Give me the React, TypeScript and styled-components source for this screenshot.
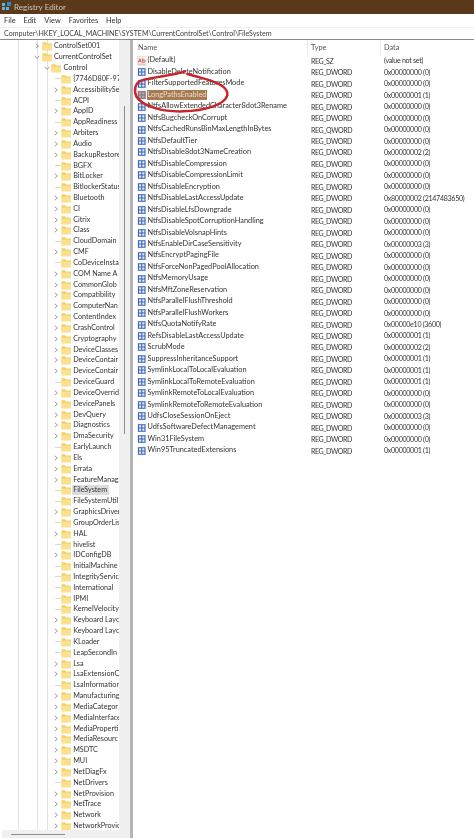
import React from "react";
import styled, { createGlobalStyle } from "styled-components";

const Global = createGlobalStyle`
  html, body { margin: 0; padding: 0; background: #fff; }
  body { width: 474px; height: 838px; overflow: hidden; font-family: "Lato", "Noto Sans", sans-serif; }
`;
const Window = styled.div`
  position: relative; width: 474px; height: 838px; display: flex; flex-direction: column;
  overflow: hidden; background: #fff; color: #333; font-size: 7.35px; filter: blur(0.4px);
`;
const TitleBar = styled.div`
  height: 13.5px; flex: none; background: #5b3a1b; display: flex; align-items: center; gap: 3px;
  padding-left: 2px; color: #cfc3b6; font-size: 8.1px;
`;
const MenuBar = styled.div`
  height: 13px; flex: none; display: flex; align-items: center; padding-left: 4px; gap: 8px; font-size: 7.4px;
`;
const AddressBar = styled.div`
  height: 11.5px; flex: none; display: flex; align-items: center; padding-left: 4px; font-size: 7.08px;
  border-top: 1px solid #f0f0f0; border-bottom: 1px solid #8a8a8a; white-space: nowrap; color: #3c3c3c;
`;
const Body = styled.div`flex: 1; min-height: 0; display: flex;`;
const TreePane = styled.div`
  width: 130px; flex: none; display: flex; flex-direction: column; overflow: hidden;
`;
const TreeMain = styled.div`flex: 1; min-height: 0; display: flex; overflow: hidden;`;
const TreeList = styled.div`
  width: 119px; flex: none; overflow: hidden; padding-top: 1px; font-size: 7.2px;
  background:
    linear-gradient(#e2e2e2, #e2e2e2) 18px 0 / 1px 100% no-repeat,
    linear-gradient(#e2e2e2, #e2e2e2) 37px 0 / 1px 100% no-repeat,
    linear-gradient(#e2e2e2, #e2e2e2) 47px 0 / 1px 100% no-repeat;
`;
const TreeRow = styled.div<{ $level: number }>`
  height: 10.83px; display: flex; align-items: center; white-space: nowrap;
  padding-left: ${p => 33 + p.$level * 9.6}px;
`;
const Chevron = styled.span`
  width: 8px; flex: none; margin-right: 0.5px; display: flex; justify-content: center; color: #8d8d8d;
`;
const Connector = styled.span`
  width: 5.5px; height: 1px; flex: none; margin-left: 3px; background: #d8d8d8;
`;
const Label = styled.span<{ $sel?: boolean }>`
  margin-left: 0.5px; padding: 0 1.5px; height: 10px; line-height: 10px;
  background: ${p => (p.$sel ? "#dcdcdc" : "transparent")};
`;
const VTrack = styled.div`
  position: relative; flex: 1; background: #f0f0f0;
`;
const VThumb = styled.div`
  position: absolute; left: 4.5px; top: 66px; width: 1.5px; height: 328px; background: #8e8e8e;
`;
const HTrack = styled.div`
  position: relative; height: 8px; flex: none; margin-left: 2px; background: #f0f0f0;
`;
const HThumb = styled.div`
  position: absolute; left: 9px; top: 3.5px; width: 54px; height: 1.5px; background: #8e8e8e;
`;
const Splitter = styled.div`width: 3px; flex: none; background: #b4b4b4;`;
const ValuePane = styled.div`flex: 1; min-width: 0; display: flex; flex-direction: column; padding-left: 4px;`;
const HeaderRow = styled.div`
  height: 15px; flex: none; display: grid; grid-template-columns: 170px 73px 1fr; align-items: center; color: #555;
`;
const HeaderCell = styled.div<{ $sep?: boolean }>`
  height: 100%; display: flex; align-items: center; padding-left: ${p => (p.$sep ? "4px" : "1px")};
  box-shadow: ${p => (p.$sep ? "inset 1px 0 0 #ececec" : "none")};
`;
const ValueRow = styled.div`
  height: 11.47px; display: grid; grid-template-columns: 170px 73px 1fr; align-items: center; white-space: nowrap;
`;
const NameCell = styled.div`display: flex; align-items: center; min-width: 0;`;
const ValName = styled.span<{ $sel?: boolean }>`
  padding: 0 1px; height: 10.5px; line-height: 10.5px;
  background: ${p => (p.$sel ? "#a67a52" : "transparent")};
  color: ${p => (p.$sel ? "#ecdcc8" : "inherit")};
`;
const TypeCell = styled.div`padding-left: 4px; font-size: 7px; letter-spacing: -0.39px;`;
const DataCell = styled.div`padding-left: 4px; font-size: 7.1px; letter-spacing: -0.3px;`;
const Ink = styled.svg`position: absolute; left: 130px; top: 62px; pointer-events: none;`;

const Folder = () => (
  <svg width="10.5" height="10" viewBox="0 0 11 10" style={{ flex: "none" }}>
    <path d="M.5 1.2h3.8l1 1.3h5.2v7H.5z" fill="#f6cf62" />
    <path d="M.5 3.6h10v5.9H.5z" fill="#fbe08e" />
  </svg>
);
const Chev = ({ open }: { open?: boolean }) => (
  <svg width="6" height="6" viewBox="0 0 6 6">
    <path d={open ? "M.8 1.8L3 4.4l2.2-2.6" : "M1.8.8L4.4 3 1.8 5.2"} fill="none" stroke="currentColor" strokeWidth=".9" />
  </svg>
);
const DwordIcon = ({ dim }: { dim?: boolean }) => {
  const c = dim ? "#7d7486" : "#3a62b4";
  return (
    <svg width="9.5" height="10" viewBox="0 0 10 10" style={{ flex: "none" }}>
      <rect x=".5" y=".5" width="9" height="9" fill={dim ? "#b9aeb0" : "#e4ecf8"} />
      <path d="M1 1.5h8M1 5h8M1 8.5h8M1.6 1v8M5 1v8M8.4 1v8" stroke={c} strokeWidth="1.1" fill="none" />
    </svg>
  );
};
const SzIcon = () => (
  <svg width="9.5" height="10" viewBox="0 0 10 10" style={{ flex: "none" }}>
    <rect x=".5" y=".5" width="9" height="9" fill="#f7efe9" stroke="#d8d0cc" strokeWidth=".5" />
    <path d="M1.5 6.5L3 2.6l1.5 3.9M2 5.2h2M6 2.2v4.3M6 4.4c1.8-1.2 2.8 0 2.4 1.2-.4 1-1.8 1.2-2.4.6" fill="none" stroke="#d2483a" strokeWidth=".9" />
    <path d="M1 8.4h8" stroke="#b0b0b0" strokeWidth=".7" />
  </svg>
);

type T = [string, number, boolean | null, boolean?];
const tree: T[] = [
  ["ControlSet001", 0, false], ["CurrentControlSet", 0, true], ["Control", 1, true],
  ["{7746D80F-97E", 2, null], ["AccessibilitySe", 2, false], ["ACPI", 2, null], ["AppID", 2, false],
  ["AppReadiness", 2, null], ["Arbiters", 2, false], ["Audio", 2, false], ["BackupRestore", 2, false],
  ["BGFX", 2, null], ["BitLocker", 2, false], ["BitlockerStatus", 2, null], ["Bluetooth", 2, false],
  ["CI", 2, false], ["Citrix", 2, false], ["Class", 2, false], ["CloudDomain", 2, null], ["CMF", 2, false],
  ["CoDeviceInsta", 2, null], ["COM Name A", 2, false], ["CommonGlob", 2, false], ["Compatibility", 2, false],
  ["ComputerNan", 2, false], ["ContentIndex", 2, false], ["CrashControl", 2, false], ["Cryptography", 2, false],
  ["DeviceClasses", 2, false], ["DeviceContair", 2, false], ["DeviceContair", 2, false], ["DeviceGuard", 2, null],
  ["DeviceOverrid", 2, false], ["DevicePanels", 2, false], ["DevQuery", 2, false], ["Diagnostics", 2, false],
  ["DmaSecurity", 2, false], ["EarlyLaunch", 2, null], ["Els", 2, false], ["Errata", 2, false],
  ["FeatureManag", 2, false], ["FileSystem", 2, null, true], ["FileSystemUtil", 2, null], ["GraphicsDriver", 2, false],
  ["GroupOrderLis", 2, null], ["HAL", 2, false], ["hivelist", 2, null], ["IDConfigDB", 2, false],
  ["InitialMachine", 2, null], ["IntegrityServic", 2, null], ["International", 2, null], ["IPMI", 2, null],
  ["KernelVelocity", 2, null], ["Keyboard Layc", 2, false], ["Keyboard Layc", 2, false], ["KLoader", 2, null],
  ["LeapSecondIn", 2, null], ["Lsa", 2, false], ["LsaExtensionC", 2, false], ["LsaInformation", 2, null],
  ["Manufacturing", 2, false], ["MediaCategor", 2, false], ["MediaInterface", 2, false], ["MediaProperti", 2, false],
  ["MediaResourc", 2, false], ["MSDTC", 2, false], ["MUI", 2, false], ["NetDiagFx", 2, false], ["NetDrivers", 2, null],
  ["NetProvision", 2, false], ["NetTrace", 2, false], ["Network", 2, false], ["NetworkProvic", 2, false],
];
const d = "REG_DWORD";
const values: [string, string, string][] = [
  ["(Default)", "REG_SZ", "(value not set)"],
  ["DisableDeleteNotification", d, "0x00000000 (0)"],
  ["FilterSupportedFeaturesMode", d, "0x00000000 (0)"],
  ["LongPathsEnabled", d, "0x00000001 (1)"],
  ["NtfsAllowExtendedCharacter8dot3Rename", d, "0x00000000 (0)"],
  ["NtfsBugcheckOnCorrupt", d, "0x00000000 (0)"],
  ["NtfsCachedRunsBinMaxLengthInBytes", "REG_QWORD", "0x00000000 (0)"],
  ["NtfsDefaultTier", d, "0x00000000 (0)"],
  ["NtfsDisable8dot3NameCreation", d, "0x00000002 (2)"],
  ["NtfsDisableCompression", d, "0x00000000 (0)"],
  ["NtfsDisableCompressionLimit", d, "0x00000000 (0)"],
  ["NtfsDisableEncryption", d, "0x00000000 (0)"],
  ["NtfsDisableLastAccessUpdate", d, "0x80000002 (2147483650)"],
  ["NtfsDisableLfsDowngrade", d, "0x00000000 (0)"],
  ["NtfsDisableSpotCorruptionHandling", d, "0x00000000 (0)"],
  ["NtfsDisableVolsnapHints", d, "0x00000000 (0)"],
  ["NtfsEnableDirCaseSensitivity", d, "0x00000003 (3)"],
  ["NtfsEncryptPagingFile", d, "0x00000000 (0)"],
  ["NtfsForceNonPagedPoolAllocation", d, "0x00000000 (0)"],
  ["NtfsMemoryUsage", d, "0x00000000 (0)"],
  ["NtfsMftZoneReservation", d, "0x00000000 (0)"],
  ["NtfsParallelFlushThreshold", d, "0x00000000 (0)"],
  ["NtfsParallelFlushWorkers", d, "0x00000000 (0)"],
  ["NtfsQuotaNotifyRate", d, "0x00000e10 (3600)"],
  ["RefsDisableLastAccessUpdate", d, "0x00000001 (1)"],
  ["ScrubMode", d, "0x00000002 (2)"],
  ["SuppressInheritanceSupport", d, "0x00000001 (1)"],
  ["SymlinkLocalToLocalEvaluation", d, "0x00000001 (1)"],
  ["SymlinkLocalToRemoteEvaluation", d, "0x00000001 (1)"],
  ["SymlinkRemoteToLocalEvaluation", d, "0x00000000 (0)"],
  ["SymlinkRemoteToRemoteEvaluation", d, "0x00000000 (0)"],
  ["UdfsCloseSessionOnEject", d, "0x00000003 (3)"],
  ["UdfsSoftwareDefectManagement", d, "0x00000000 (0)"],
  ["Win31FileSystem", d, "0x00000000 (0)"],
  ["Win95TruncatedExtensions", d, "0x00000001 (1)"],
];

export default function App() {
  return (
    <Window>
      <Global />
      <TitleBar>
        <svg width="9" height="9" viewBox="0 0 9 9"><path d="M0 1h3v3H0zM0 5h3v3H0zM4 5h3v3H4z" fill="#5fb4e4" /><path d="M5 0h4v4H5z" fill="#2f86c8" /></svg>
        <span>Registry Editor</span>
      </TitleBar>
      <MenuBar>
        <span>File</span><span>Edit</span><span>View</span><span>Favorites</span><span>Help</span>
      </MenuBar>
      <AddressBar>Computer\HKEY_LOCAL_MACHINE\SYSTEM\CurrentControlSet\Control\FileSystem</AddressBar>
      <Body>
        <TreePane>
          <TreeMain>
            <TreeList>
              {tree.map(([name, level, open, sel], i) => (
                <TreeRow key={i} $level={level}>
                  {open === null ? <Connector /> : <Chevron><Chev open={open} /></Chevron>}
                  <Folder />
                  <Label $sel={sel}>{name}</Label>
                </TreeRow>
              ))}
            </TreeList>
            <VTrack><VThumb /></VTrack>
          </TreeMain>
          <HTrack><HThumb /></HTrack>
        </TreePane>
        <Splitter />
        <ValuePane>
          <HeaderRow>
            <HeaderCell>Name</HeaderCell>
            <HeaderCell $sep>Type</HeaderCell>
            <HeaderCell $sep>Data</HeaderCell>
          </HeaderRow>
          {values.map(([n, t, v], i) => (
            <ValueRow key={i}>
              <NameCell>
                {t === "REG_SZ" ? <SzIcon /> : <DwordIcon dim={i === 3} />}
                <ValName $sel={i === 3}>{n}</ValName>
              </NameCell>
              <TypeCell>{t}</TypeCell>
              <DataCell>{v}</DataCell>
            </ValueRow>
          ))}
        </ValuePane>
      </Body>
      <Ink width="105" height="52" viewBox="0 0 315 156">
        <path d="M165 28C130 40 70 45 35 55 15 62 10 85 20 105 40 135 100 150 160 148 220 146 285 130 292 100 295 80 270 65 240 55 215 48 195 42 172 36" fill="none" stroke="#c8242c" strokeWidth="7.5" strokeLinecap="round" />
      </Ink>
    </Window>
  );
}
